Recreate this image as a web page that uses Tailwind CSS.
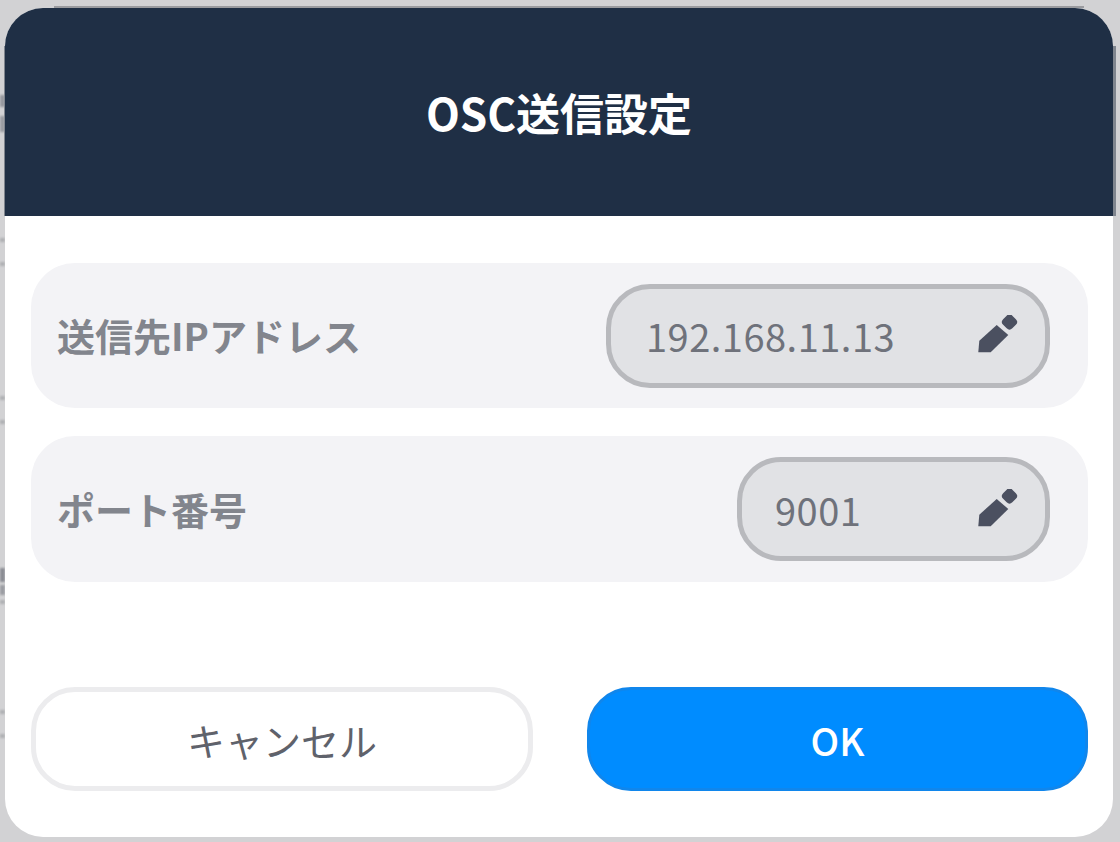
<!DOCTYPE html>
<html lang="ja">
<head>
    <meta charset="UTF-8">
    <title>OSC送信設定</title>
    <script src="https://cdn.jsdelivr.net/npm/@tailwindcss/browser@4"></script>
</head>
<body class="relative w-[1120px] h-[842px] overflow-hidden bg-[#d2d2d4] font-['Noto_Sans_CJK_JP','Noto_Sans',sans-serif]">
    <!-- Page text showing at the left edge behind the dialog -->
    <div class="absolute left-0 top-[95px] w-[5px] h-[12px] bg-[#96989e] blur-[1px]"></div>
    <div class="absolute left-0 top-[116px] w-[5px] h-[16px] bg-[#9a9ca2] blur-[1px]"></div>
    <div class="absolute left-0 top-[238px] w-[5px] h-[4px] bg-[#aeafb3] blur-[1px]"></div>
    <div class="absolute left-0 top-[262px] w-[5px] h-[4px] bg-[#aeafb3] blur-[1px]"></div>
    <div class="absolute left-0 top-[396px] w-[5px] h-[4px] bg-[#aeafb3] blur-[1px]"></div>
    <div class="absolute left-0 top-[420px] w-[5px] h-[4px] bg-[#aeafb3] blur-[1px]"></div>
    <div class="absolute left-0 top-[568px] w-[5px] h-[14px] bg-[#8a8c93] blur-[1px]"></div>
    <div class="absolute left-0 top-[585px] w-[5px] h-[10px] bg-[#9a9ca2] blur-[1px]"></div>
    <div class="absolute left-0 top-[600px] w-[5px] h-[4px] bg-[#aeafb3] blur-[1px]"></div>
    <div class="absolute left-0 top-[710px] w-[5px] h-[4px] bg-[#aeafb3] blur-[1px]"></div>
    <div class="absolute left-0 top-[734px] w-[5px] h-[4px] bg-[#aeafb3] blur-[1px]"></div>

    <!-- Soft edge of the dialog header -->
    <div class="absolute left-[54px] top-[6px] w-[1030px] h-[2px] bg-[#9a9b9f]"></div>
    <div class="absolute left-[4px] top-[46px] w-[2px] h-[170px] bg-[#7f858e]"></div>
    <div class="absolute left-[1113px] top-[46px] w-[3px] h-[170px] bg-[#7f858e]"></div>

    <!-- Dialog -->
    <div class="absolute left-[5px] top-[8px] w-[1108px] h-[829px] bg-white rounded-[38px] overflow-hidden flex flex-col">
        <div class="h-[208px] shrink-0 bg-[#1f2f45] flex items-center justify-center">
            <h1 class="text-[44px] font-bold text-white leading-none">OSC送信設定</h1>
        </div>

        <div class="flex flex-col gap-[28px] pl-[26px] pr-[25px] pt-[47px]">
            <div class="h-[145px] bg-[#f3f3f6] rounded-[44px] flex items-center justify-between pl-[26px] pr-[38px]">
                <span class="text-[38px] font-bold text-[#82858d] -translate-y-px">送信先IPアドレス</span>
                <div class="w-[444px] h-[104px] bg-[#e1e2e5] border-[5px] border-[#b8b9bd] rounded-[44px] flex items-center justify-between pl-[35px] pr-[26px]">
                    <span class="text-[38px] text-[#6f727b] tracking-[0.5px]">192.168.11.13</span>
                    <svg class="w-[41px] h-[41px]" viewBox="0 0 41 41" fill="#4b5060"><path d="M1.3 25.7 18.7 10 30.3 20 12.7 37.3 H0.3 Z"/><rect x="25" y="0.5" width="13" height="13" rx="4" transform="rotate(45 31.5 7)"/></svg>
                </div>
            </div>
            <div class="h-[146px] bg-[#f3f3f6] rounded-[44px] flex items-center justify-between pl-[26px] pr-[38px]">
                <span class="text-[38px] font-bold text-[#82858d] -translate-y-px">ポート番号</span>
                <div class="w-[313px] h-[104px] bg-[#e1e2e5] border-[5px] border-[#b8b9bd] rounded-[44px] flex items-center justify-between pl-[33px] pr-[26px]">
                    <span class="text-[38px] text-[#6f727b] tracking-[0.5px]">9001</span>
                    <svg class="w-[41px] h-[41px]" viewBox="0 0 41 41" fill="#4b5060"><path d="M1.3 25.7 18.7 10 30.3 20 12.7 37.3 H0.3 Z"/><rect x="25" y="0.5" width="13" height="13" rx="4" transform="rotate(45 31.5 7)"/></svg>
                </div>
            </div>
        </div>

        <div class="flex justify-between pl-[26px] pr-[25px] mt-[105px]">
            <button class="w-[502px] h-[104px] bg-white border-[5px] border-[#ececee] rounded-[44px] text-[38px] text-[#5f626b]">キャンセル</button>
            <button class="w-[501px] h-[104px] bg-[#008cff] border-[3px] border-[#1086ec] rounded-[44px] text-[38px] font-medium text-white">OK</button>
        </div>
    </div>
</body>
</html>
